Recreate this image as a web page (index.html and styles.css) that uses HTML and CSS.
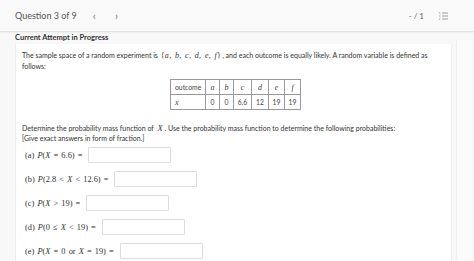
FILE: index.html
```html
<!DOCTYPE html>
<html lang="en">
<head>
  <meta charset="UTF-8">
  <title>Question 3 of 9</title>
  <link rel="stylesheet" href="styles.css">
</head>
<body>

<header>
  <div class="nav-left">
    <span class="q-title">Question 3 of 9</span>
    <span class="arrow">&lsaquo;</span>
    <span class="arrow">&rsaquo;</span>
  </div>
  <div class="nav-right">
    <span class="score">- / 1</span>
    <svg class="list-icon" width="9" height="8" viewBox="0 0 9 8">
      <g fill="none" stroke="#888" stroke-width="0.8">
        <line x1="0" y1="1" x2="1.4" y2="1"/>
        <line x1="0" y1="4" x2="1.4" y2="4"/>
        <line x1="0" y1="7" x2="1.4" y2="7"/>
        <line x1="3" y1="1" x2="9" y2="1"/>
        <line x1="3" y1="4" x2="9" y2="4"/>
        <line x1="3" y1="7" x2="9" y2="7"/>
      </g>
    </svg>
  </div>
</header>

<main>
  <div class="column">
    <h4 class="attempt">Current Attempt in Progress</h4>

    <div class="card">
      <p class="text">The sample space of a random experiment is <span class="set">{<i>a</i>, <i>b</i>, <i>c</i>, <i>d</i>, <i>e</i>, <i>f</i>}</span>, and each outcome is equally likely. A random variable is defined as follows:</p>

      <table class="pmf">
        <tr>
          <td class="head">outcome</td>
          <td><i>a</i></td><td><i>b</i></td><td><i>c</i></td><td><i>d</i></td><td><i>e</i></td><td><i>f</i></td>
        </tr>
        <tr>
          <td class="head"><i>x</i></td>
          <td>0</td><td>0</td><td>6.6</td><td>12</td><td>19</td><td>19</td>
        </tr>
      </table>

      <p class="text second">Determine the probability mass function of <i class="var">X</i> . Use the probability mass function to determine the following probabilities:<br>[Give exact answers in form of fraction.]</p>

      <div class="answers">
        <div class="row"><span class="label">(a) <i>P</i>(<i>X</i> = 6.6) =</span><span class="box"></span></div>
        <div class="row"><span class="label">(b) <i>P</i>(2.8 &lt; <i>X</i> &lt; 12.6) =</span><span class="box"></span></div>
        <div class="row"><span class="label">(c) <i>P</i>(<i>X</i> &gt; 19) =</span><span class="box"></span></div>
        <div class="row"><span class="label">(d) <i>P</i>(0 &le; <i>X</i> &lt; 19) =</span><span class="box"></span></div>
        <div class="row"><span class="label">(e) <i>P</i>(<i>X</i> = 0 or <i>X</i> = 19) =</span><span class="box"></span></div>
      </div>
    </div>
  </div>
  <div class="side"></div>
</main>

</body>
</html>
```

FILE: styles.css
```css
body {
  margin: 0;
  font-family: 'Lato', sans-serif;
  background-color: #f8f8f8;
  color: #333;
}
header {
  height: 31px;
  background-color: #f9f9f9;
  border-bottom: 1px solid #e4e4e4;
  box-shadow: 0 1px 2px rgba(0, 0, 0, 0.05);
  display: flex;
  align-items: center;
  justify-content: space-between;
  padding: 0 26px 0 15px;
}
.nav-left {
  display: flex;
  align-items: center;
}
.q-title {
  font-size: 9px;
  color: #555;
}
.arrow {
  font-size: 11px;
  color: #777;
  margin-left: 16px;
}
.arrow + .arrow {
  margin-left: 19px;
}
.nav-right {
  display: flex;
  align-items: center;
}
.score {
  font-size: 8px;
  color: #666;
}
.list-icon {
  margin-left: 15px;
}
main {
  display: flex;
}
.column {
  width: 437px;
  margin-left: 15px;
}
.attempt {
  margin: 0;
  height: 12px;
  font-size: 7.5px;
  font-weight: bold;
  line-height: 12px;
  color: #333;
}
.card {
  background-color: #fff;
  border-left: 1px solid #eee;
  border-right: 1px solid #eee;
  padding: 6px 0 10px;
  min-height: 200px;
}
.side {
  flex: 1;
  margin: 8px 2px 0 4px;
  background-color: #fbfbfb;
  border-left: 1px solid #eee;
}
.text {
  margin: 0 0 0 6px;
  padding-right: 10px;
  font-size: 7px;
  line-height: 10px;
  color: #333;
}
.text.second {
  margin-top: 13px;
}
i {
  font-family: 'Liberation Serif', serif;
}
.set {
  font-family: 'Liberation Serif', serif;
  font-size: 8px;
  letter-spacing: 0.3px;
  word-spacing: 1.2px;
  margin: 0 1px;
}
.var {
  font-size: 8.5px;
  margin-left: 2px;
}
.pmf {
  border-collapse: collapse;
  margin: 8px 0 0 154px;
  font-size: 6.8px;
  color: #444;
}
.pmf td {
  border: 1px solid #999;
  height: 14px;
  padding: 0;
  text-align: center;
}
.pmf td i {
  font-size: 8px;
}
.pmf td.head {
  text-align: left;
  padding-left: 4px;
  width: 30px;
}
.pmf td:nth-child(2) { width: 13px; }
.pmf td:nth-child(3) { width: 13px; }
.pmf td:nth-child(4) { width: 17px; border-left-color: #555; }
.pmf td:nth-child(5) { width: 16px; }
.pmf td:nth-child(6) { width: 15px; }
.pmf td:nth-child(7) { width: 15px; }
.answers {
  margin: 0 0 0 9px;
}
.row {
  display: flex;
  align-items: center;
  height: 24px;
}
.label {
  font-family: 'Liberation Serif', serif;
  font-size: 8.4px;
  word-spacing: 1px;
  color: #333;
  margin-right: 6px;
}
.box {
  width: 81px;
  height: 14px;
  border: 1px solid #ddd;
  border-radius: 1px;
  background-color: #fff;
}
```
